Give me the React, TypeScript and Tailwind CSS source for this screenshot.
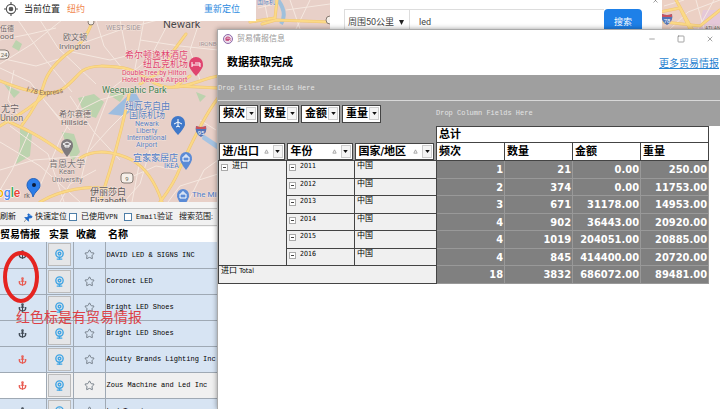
import { Anchor, Minus, Square, Star, Webcam, X } from 'lucide-react';

const highways = [
  'M93 20 C88 34 82 44 72 50 C58 60 48 70 44 84 C40 100 32 112 22 125',
  'M0 81 C18 88 30 92 46 93 C64 94 72 80 82 71 C92 64 108 66 124 68 C142 71 148 84 166 87 C186 89 198 80 218 76',
  'M48 92 C36 104 18 116 0 126',
  'M218 98 C204 116 190 146 180 168 C174 184 166 194 160 202',
  'M190 76 L176 86 L218 88',
  'M130 90 C124 120 116 150 110 170 L100 202',
  'M80 158 C96 148 116 152 132 160 C146 168 156 184 162 202',
  'M0 118 C24 128 40 136 62 152',
  'M40 202 C60 190 90 184 112 190',
  'M186 34 L174 50 L160 72 L140 84',
  'M277 0 L275 18 L250 22',
  'M262 24 L276 20 L330 22',
  'M650 14 L680 8 L690 29',
  'M664 22 L700 26 L720 10',
  'M676 0 L692 29',
];

const streets = [
  'M0 58 L36 66 L62 58', 'M0 68 L30 82 L60 120', 'M18 20 L44 58 L72 92', 'M40 20 L58 48 L96 84',
  'M62 20 L32 44 L0 64', 'M80 44 L120 30 L158 20', 'M72 52 L110 60 L150 50', 'M96 20 L104 46 L130 78',
  'M120 20 L128 60', 'M144 20 L134 74', 'M170 20 L150 58 L110 90', 'M200 20 L190 50 L200 80',
  'M218 50 L180 46 L140 40', 'M60 120 L100 100 L128 92', 'M70 96 L94 132 L120 160', 'M10 126 L48 154 L64 202',
  'M0 142 L40 166 L80 202', 'M30 130 L12 170 L0 190', 'M84 96 L60 140 L40 186', 'M110 92 L88 150 L80 184',
  'M0 170 L34 160 L84 156', 'M128 110 L110 128 L90 150', 'M140 160 L132 202', 'M120 182 L156 166 L178 170',
  'M96 170 L70 184 L60 202', 'M150 150 L140 184 L124 202', 'M168 202 L180 186 L218 174', 'M200 120 L216 130',
  'M188 202 L204 170 L218 160', 'M14 70 L8 100 L20 118', 'M44 100 L70 130', 'M0 40 L30 34 L56 28',
  'M258 8 L275 4', 'M264 0 L268 20', 'M290 0 L300 29', 'M310 0 L296 29', 'M286 10 L330 4',
  'M664 6 L684 0', 'M696 0 L704 29', 'M714 0 L698 29', 'M670 29 L688 12 L720 0',
];

const labels = [
  { x: 0, y: 31, text: '伍德', size: 7, fill: '#6b6466' },
  { x: 0, y: 39, text: 'ood', size: 8, fill: '#6b6466' },
  { x: 63, y: 40, text: '欧文顿', size: 8, fill: '#6b6466' },
  { x: 59, y: 49, text: 'Irvington', size: 8, fill: '#6b6466' },
  { x: 106, y: 30, text: 'WEST SIDE', size: 7, fill: '#9b8f92' },
  { x: 163, y: 28, text: 'Newark', size: 11, fill: '#4a4648' },
  { x: 199, y: 46, text: 'IRONBOUND', size: 6, fill: '#9b8f92' },
  { x: 125, y: 58, text: '希尔顿逸林酒店', size: 9, fill: '#e0446f' },
  { x: 143, y: 67, text: '纽瓦克机场', size: 9, fill: '#e0446f' },
  { x: 122, y: 75, text: 'DoubleTree by Hilton', size: 7, fill: '#e0446f' },
  { x: 122, y: 82, text: 'Hotel Newark Airport', size: 7, fill: '#e0446f' },
  { x: 102, y: 93, text: 'Weequahic Park', size: 9, fill: '#3f8050' },
  { x: 1, y: 112, text: '尤宁', size: 9, fill: '#6b6466' },
  { x: 0, y: 121, text: 'Union', size: 9, fill: '#6b6466' },
  { x: 59, y: 117, text: '希尔赛德', size: 8, fill: '#6b6466' },
  { x: 61, y: 125, text: 'Hillside', size: 8, fill: '#6b6466' },
  { x: 125, y: 109, text: '纽瓦克自由', size: 9, fill: '#5a7fc0' },
  { x: 129, y: 118, text: '国际机场', size: 9, fill: '#5a7fc0' },
  { x: 135, y: 126, text: 'Newark', size: 7, fill: '#5a7fc0' },
  { x: 136, y: 133, text: 'Liberty', size: 7, fill: '#5a7fc0' },
  { x: 127, y: 140, text: 'International', size: 7, fill: '#5a7fc0' },
  { x: 136, y: 147, text: 'Airport', size: 7, fill: '#5a7fc0' },
  { x: 133, y: 161, text: '宜家家居店', size: 9, fill: '#4c7bc8' },
  { x: 164, y: 168, text: 'IKEA', size: 7, fill: '#4c7bc8' },
  { x: 49, y: 167, text: '肯恩大学', size: 9, fill: '#777174' },
  { x: 59, y: 174, text: 'Kean', size: 7, fill: '#777174' },
  { x: 52, y: 182, text: 'University', size: 7, fill: '#777174' },
  { x: 90, y: 195, text: '伊丽莎白', size: 9, fill: '#5d5759' },
  { x: 90, y: 204, text: 'Elizabeth', size: 9, fill: '#5d5759' },
  { x: 192, y: 197, text: 'The Mills', size: 8, fill: '#4c7bc8' },
  { x: 257, y: 4, text: '国际机', size: 6, fill: '#5a7fc0' },
  { x: 705, y: 30, text: 'ATLAN', size: 5, fill: '#6b6466' },
];

const pins = [
  { x: 196, y: 64, r: 7, fill: '#e0446f', glyph: 'M-4 -2 V3 M-4 1 H4 V3 M-1 -1 H4 V1' },
  { x: 178, y: 123, r: 7, fill: '#3f78c9', glyph: 'M0 -4 V4 M-4 1 L0 -1 L4 1 M-2 4 L0 3 L2 4' },
  { x: 186, y: 158, r: 6, fill: '#5b8bd6', glyph: 'M-3 -1 H3 V3 H-3 Z M-1 -1 V-3 H1 V-1' },
  { x: 67, y: 145, r: 6, fill: '#7f7a7d', glyph: 'M-4 -1 L0 -3 L4 -1 L0 1 Z M-2 0 V2 H2 V0' },
  { x: 183, y: 195, r: 6, fill: '#5b8bd6', glyph: 'M-3 -1 H3 V3 H-3 Z M-1 -1 V-3 H1 V-1' },
];

const companies = [
  { name: 'DAVID LED & SIGNS INC', hasIntel: false },
  { name: 'Coronet LED', hasIntel: true },
  { name: 'Bright LED Shoes', hasIntel: false },
  { name: 'Bright LED Shoes', hasIntel: false },
  { name: 'Acuity Brands Lighting Inc', hasIntel: true },
  { name: 'Zous Machine and Led Inc', hasIntel: true, current: true },
  { name: 'Led Tronix', hasIntel: false },
];

const measures = ['频次', '数量', '金额', '重量'];
const rowFields = ['进/出口', '年份', '国家/地区'];

const yearRows = [
  { year: '2011', values: ['1', '21', '0.00', '250.00'] },
  { year: '2012', values: ['2', '374', '0.00', '11753.00'] },
  { year: '2013', values: ['3', '671', '31178.00', '14953.00'] },
  { year: '2014', values: ['4', '902', '36443.00', '20920.00'] },
  { year: '2015', values: ['4', '1019', '204051.00', '20885.00'] },
  { year: '2016', values: ['4', '845', '414400.00', '20720.00'] },
];
const totals = ['18', '3832', '686072.00', '89481.00'];

function CityMap() {
  return (
    <svg
      className="absolute inset-0 h-full w-full"
      viewBox="0 0 720 202"
      preserveAspectRatio="xMinYMin slice"
      fontFamily="Roboto, 'Noto Sans CJK SC', sans-serif"
    >
      <rect width="720" height="202" fill="#e8d0c8" />
      <g fill="#bcd3ae">
        <path d="M16 40 l6 4 l-3 7 l-7 -4z M78 98 l16 -4 l10 8 l-8 16 l-12 -4z" />
        <path d="M20 128 l12 6 l-2 22 l-14 8 l4 -18z M62 132 l12 2 l6 18 l-8 10z M4 84 l16 8 l-6 6z" />
        <path d="M108 94 l20 -4 l-8 12z M196 92 l10 4 l-6 6z" />
      </g>
      <path d="M134 90 L142 104 L124 116 L108 114 Z" fill="#9dbde0" />
      <path d="M203 134 L218 144 L218 150 L202 139 Z" fill="#a5c3e2" />
      <path d="M278 0 C284 8 286 16 281 24" fill="none" stroke="#9fc0dc" strokeWidth="4" />
      <rect x="662" width="58" height="30" fill="#ecd0c4" />
      <path d="M703 10 h17 v20 h-22z" fill="#e5c8d8" />
      <g fill="none" stroke="#f5e8e0" strokeWidth="1">
        {streets.map((d) => <path key={d} d={d} />)}
      </g>
      <g fill="none" strokeLinecap="round">
        {highways.map((d) => <path key={d} d={d} stroke="#f0c573" strokeWidth="3" />)}
        {highways.map((d) => <path key={`in-${d}`} d={d} stroke="#fbd986" strokeWidth="2" />)}
      </g>
      <path id="i78" d="M26 91 Q44 98 62 93" fill="none" />
      <text fontSize="7" fill="#8b6b4e"><textPath href="#i78">I-78 Express</textPath></text>
      {pins.map((pin) => (
        <g key={`${pin.x}-${pin.y}`} transform={`translate(${pin.x} ${pin.y})`}>
          <path d={`M${-pin.r} 1 Q${-pin.r + 1} 6 0 12 Q${pin.r - 1} 6 ${pin.r} 1Z`} fill={pin.fill} />
          <circle r={pin.r} fill={pin.fill} />
          <path d={pin.glyph} fill="none" stroke="#fff" strokeWidth="1" />
        </g>
      ))}
      {labels.map((l) => (
        <text key={`${l.text}-${l.y}`} x={l.x} y={l.y} fontSize={l.size} fill={l.fill} stroke="#f3e3dc" strokeWidth="1" paintOrder="stroke">
          {l.text}
        </text>
      ))}
      <g fontSize="6" fill="#665" textAnchor="middle">
        <rect x="-4" y="50" width="13" height="9" rx="4" fill="#f6efe9" stroke="#857a72" strokeWidth="1" />
        <text x="4" y="57">24</text>
        <rect x="121" y="173" width="12" height="10" rx="3" fill="#f6efe9" stroke="#857a72" strokeWidth="1" />
        <text x="127" y="181">9</text>
      </g>
      <circle cx="91" cy="22" r="3" fill="#f6efe9" stroke="#857a72" />
      {[{ x: 201, y: 131, n: '95' }, { x: 667, y: 19, n: '78' }].map((s) => (
        <g key={s.n} transform={`translate(${s.x} ${s.y})`}>
          <path d="M-5 -5 Q0 -3 5 -5 Q7 2 0 6 Q-7 2 -5 -5Z" fill="#5374b5" />
          <path d="M-5 -5 Q0 -3 5 -5 L5 -2 H-5Z" fill="#c9525c" />
          <text y="4" fontSize="6" fill="#fff" textAnchor="middle">{s.n}</text>
        </g>
      ))}
      <circle cx="330" cy="20" r="4" fill="#f6efe9" stroke="#857a72" />
      <text x="-3" y="197" fontSize="12" fontWeight="500" stroke="#fff" strokeWidth="1" paintOrder="stroke">
        <tspan fill="#f4b400">o</tspan><tspan fill="#4285f4">g</tspan><tspan fill="#34a853">l</tspan><tspan fill="#ea4335">e</tspan>
      </text>
      <text x="24" y="198" fontSize="7" fill="#6b6466">rk</text>
      <path d="M33 197 C32 191 27 190 27 185 A6 6 0 0 1 40 185 C40 190 35 191 33 197Z" fill="#2b7de9" stroke="#2463bd" strokeWidth="1" />
      <circle cx="34" cy="185" r="2" fill="#0b1b38" />
    </svg>
  );
}

function LocationBar() {
  return (
    <div className="relative flex h-[21px] w-64 items-center bg-white pr-4 pb-[3px] pl-1 text-[9px] leading-none">
      <svg viewBox="0 0 24 24" className="h-[14px] w-[14px]" fill="none" stroke="#555" strokeWidth="2">
        <circle cx="12" cy="12" r="8" />
        <circle cx="12" cy="12" r="3" fill="#555" />
        <path d="M12 0v4M12 20v4M0 12h4M20 12h4" />
      </svg>
      <span className="ml-[6px] text-[#222]">当前位置</span>
      <span className="ml-[7px] text-[#f0854a]">纽约</span>
      <a href="#relocate" className="ml-auto text-[#2b8ae0]">重新定位</a>
    </div>
  );
}

function SearchPanel() {
  return (
    <div className="relative mr-[58px] ml-auto h-10 w-[332px] bg-white pt-[9px] pr-5 pl-[14px]">
      <form className="flex h-7 text-[9px] text-[#444]" onSubmit={(e) => e.preventDefault()}>
        <div className="relative w-[66px] border border-[#ddd]">
          <select aria-label="搜索范围" className="h-full w-full appearance-none bg-transparent pl-[3px] outline-none">
            <option>周围50公里</option>
          </select>
          <svg viewBox="0 0 6 6" className="pointer-events-none absolute top-[10px] right-[5px] h-[5px] w-[5px]"><path d="M0 0h6L3 6z" fill="#222" /></svg>
        </div>
        <input aria-label="关键词" defaultValue="led" className="min-w-0 flex-1 border-y border-[#ddd] pl-[9px] outline-none" />
        <button type="submit" className="w-[38px] rounded-t-sm bg-[#1e80e8] text-white">搜索</button>
      </form>
      <X className="absolute top-[-3px] right-[3px] h-[7px] w-[7px] text-[#666]" />
    </div>
  );
}

function Toolbar() {
  return (
    <div className="flex h-[18px] items-center border-y border-[#c4c4c4] bg-[#f1f1f1] text-[8px] leading-none whitespace-nowrap text-[#111]">
      <button className="w-[24px] text-left">刷新</button>
      <button className="flex w-[45px] items-center gap-[2px]">
        <svg viewBox="0 0 12 12" className="h-[9px] w-[9px]">
          <path d="M0 12L5 6" stroke="#777" strokeWidth="1" />
          <path d="M6 1L11 5L9 7L8 6L6 8L6 11L1 6L4 6L6 4L5 2Z" fill="#1764c8" stroke="#1764c8" strokeWidth="1" />
          <circle cx="8" cy="3" r="1" fill="#7db9f2" />
        </svg>
        快速定位
      </button>
      <label className="flex w-[55px] items-center gap-1">
        <input type="checkbox" className="h-2 w-2 appearance-none border border-[#4d7ea8] bg-white" />
        <span>已使用<span className="font-['Liberation_Mono',monospace] text-[7px]">VPN</span></span>
      </label>
      <label className="flex w-[55px] items-center gap-1">
        <input type="checkbox" className="h-2 w-2 appearance-none border border-[#4d7ea8] bg-white" />
        <span><span className="font-['Liberation_Mono',monospace] text-[7px]">Email</span>验证</span>
      </label>
      <span>搜索范围:</span>
    </div>
  );
}

function CompanyTable() {
  return (
    <div className="relative">
      <table className="w-full table-fixed border-collapse">
        <thead>
          <tr className="h-[15px] bg-white text-left text-[10px] leading-none whitespace-nowrap">
            <th className="w-[46px] p-0 font-bold">贸易情报</th>
            <th className="w-[27px] p-0 pl-[3px] font-bold">实景</th>
            <th className="w-[32px] p-0 pl-[3px] font-bold">收藏</th>
            <th className="p-0 pl-[3px] font-bold">名称</th>
          </tr>
        </thead>
        <tbody>
          {companies.map((c, i) => (
            <tr key={i} className={`h-[26px] border-b border-[#9fa9b4] ${c.current ? 'bg-[#f0f0f0]' : 'bg-[#d7e4f3]'}`}>
              <td className={`border-r border-[#9fa9b4] p-0 ${c.current ? 'bg-white' : ''}`}>
                <Anchor strokeWidth={3} className={`mx-auto h-[9px] w-[9px] ${c.hasIntel ? 'text-[#e8594f]' : 'text-[#3c4650]'}`} />
              </td>
              <td className="border-r border-[#9fa9b4] p-0">
                <button aria-label="实景" className="mx-auto flex h-[23px] w-[23px] items-center justify-center border border-[#bbb] bg-[#e5e6e8]">
                  <Webcam strokeWidth={3} className="h-[11px] w-[11px] text-[#3fa4e4]" />
                </button>
              </td>
              <td className="border-r border-[#9fa9b4] p-0">
                <button aria-label="收藏" className="mx-auto block">
                  <Star strokeWidth={2} className="h-[11px] w-[11px] text-[#6d7781]" />
                </button>
              </td>
              <td className="p-0 pl-px font-['Liberation_Mono',monospace] text-[7px] whitespace-nowrap text-black">{c.name}</td>
            </tr>
          ))}
        </tbody>
      </table>
      <svg viewBox="0 0 36 52" className="pointer-events-none absolute top-6 left-[3px] h-[52px] w-9">
        <ellipse cx="18" cy="26" rx="16" ry="24" fill="none" stroke="#e52420" strokeWidth="4" />
      </svg>
      <p className="pointer-events-none absolute top-20 left-4 text-[14px] leading-5 whitespace-nowrap text-[#dd3f45]">红色标是有贸易情报</p>
    </div>
  );
}

function FieldButton({ label, sortable = false }: { label: string; sortable?: boolean }) {
  return (
    <button className={`flex items-center border border-[#444] bg-white pr-px pl-[3px] text-[11px] leading-none font-bold whitespace-nowrap text-black ${sortable ? 'h-[17px] w-full' : 'h-[18px] w-[39px]'}`}>
      {label}
      <span className="ml-auto flex items-center gap-1">
        {sortable && <svg viewBox="0 0 6 6" className="h-[5px] w-[5px]"><path d="M3 1L5 5H1Z" fill="none" stroke="#999" strokeWidth="1" /></svg>}
        <span className="flex h-[13px] w-[10px] items-center justify-center border border-[#ccc] bg-[#f4f4f4]">
          <svg viewBox="0 0 6 4" className="h-[3px] w-[5px]"><path d="M0 0h6L3 4z" fill="#111" /></svg>
        </span>
      </span>
    </button>
  );
}

function Toggle() {
  return (
    <button aria-label="收起" className="mr-1 inline-flex h-[7px] w-[7px] items-center justify-center border border-[#aaa] bg-white">
      <span className="h-px w-[3px] bg-[#444]" />
    </button>
  );
}

function ValueCells({ values }: { values: string[] }) {
  return values.map((v, i) => (
    <td key={i} className="border border-[#999] bg-[#808080] p-0 pr-px text-right align-middle font-['DejaVu_Sans_Condensed','DejaVu_Sans',sans-serif] text-[11px] leading-none font-bold text-white">
      {v}
    </td>
  ));
}

function PivotTable() {
  const cell = 'border border-[#444] bg-[#f0f0f0] p-0 pt-px pl-[2px] align-top leading-none';
  const columnHeader = 'border border-[#444] bg-white p-0 pl-[2px] text-left text-[11px] leading-none font-bold';
  return (
    <table className="w-[490px] table-fixed border-collapse bg-[#9f9f9f] font-['DejaVu_Sans_Condensed','Noto_Sans_CJK_SC',sans-serif] text-[8px] text-black">
      <colgroup>
        <col className="w-[68px]" />
        <col className="w-[68px]" />
        <col className="w-[82px]" />
        <col span={4} className="w-[68px]" />
      </colgroup>
      <thead>
        <tr className="h-[16px]">
          <td colSpan={3} className="p-0" />
          <th colSpan={4} className={columnHeader}>总计</th>
        </tr>
        <tr className="h-[18px]">
          {rowFields.map((f) => (
            <th key={f} className="p-0 pr-[2px]"><FieldButton label={f} sortable /></th>
          ))}
          {measures.map((m) => <th key={m} className={columnHeader}>{m}</th>)}
        </tr>
      </thead>
      <tbody>
        {yearRows.map((row, i) => (
          <tr key={row.year} className="h-[17px] odd:h-[18px]">
            {i === 0 && <td rowSpan={yearRows.length} className={cell}><Toggle />进口</td>}
            <td className={cell}><Toggle /><span className="text-[7px]">{row.year}</span></td>
            <td className={cell}>中国</td>
            <ValueCells values={row.values} />
          </tr>
        ))}
        <tr className="h-[18px]">
          <td colSpan={3} className={cell}>进口 <span className="text-[7px]">Total</span></td>
          <ValueCells values={totals} />
        </tr>
      </tbody>
    </table>
  );
}

function TradeWindow() {
  return (
    <section className="absolute top-[29px] right-0 bottom-0 left-[217px] overflow-hidden border-t border-l border-[#aaa] bg-white shadow-[0_0_5px_rgba(0,0,0,0.4)]">
      <header className="flex h-[17px] items-center pl-[5px] text-[8px] text-[#999]">
        <svg viewBox="0 0 20 20" className="h-[10px] w-[10px]">
          <circle cx="10" cy="10" r="9" fill="#eeddea" stroke="#8c6aa9" strokeWidth="2" />
          <path d="M5 11q1-6 5-5t5 3M6 14l2-5 2 5 2-5 3 4" fill="none" stroke="#c33f73" strokeWidth="2" />
        </svg>
        <span className="ml-1">贸易情报信息</span>
        <div className="mr-[6px] ml-auto flex gap-[21px] text-[#777]">
          <button aria-label="最小化"><Minus className="h-2 w-2" /></button>
          <button aria-label="最大化"><Square className="h-2 w-2" /></button>
          <button aria-label="关闭"><X className="h-2 w-2" /></button>
        </div>
      </header>
      <div className="flex h-7 items-center justify-between pt-1 pr-px pl-[9px] whitespace-nowrap">
        <h1 className="text-[11px] font-bold text-black">数据获取完成</h1>
        <a href="#more" className="text-[10px] text-[#1f7fd0] underline">更多贸易情报</a>
      </div>
      <div className="flex h-[26px] items-center border-b border-[#d8d8d8] bg-[#9f9f9f] pt-[2px] font-['Liberation_Mono',monospace] text-[7px] text-[#e4e4e4]">
        Drop Filter Fields Here
      </div>
      <div className="flex h-[25px] items-center bg-[#9f9f9f]">
        <div className="flex w-[218px] gap-[2px] pl-px">
          {measures.map((m) => <FieldButton key={m} label={m} />)}
        </div>
        <span className="font-['Liberation_Mono',monospace] text-[7px] text-[#e4e4e4]">Drop Column Fields Here</span>
      </div>
      <PivotTable />
    </section>
  );
}

export default function App() {
  return (
    <main className="relative h-screen overflow-hidden bg-[#f4f4f4] font-['Roboto','Noto_Sans_CJK_SC',sans-serif]">
      <div className="relative flex h-[202px] items-start overflow-hidden">
        <CityMap />
        <LocationBar />
        <SearchPanel />
      </div>
      <div className="w-[217px] overflow-hidden pt-[6px]">
        <Toolbar />
        <div className="pt-px">
          <CompanyTable />
        </div>
      </div>
      <TradeWindow />
    </main>
  );
}
